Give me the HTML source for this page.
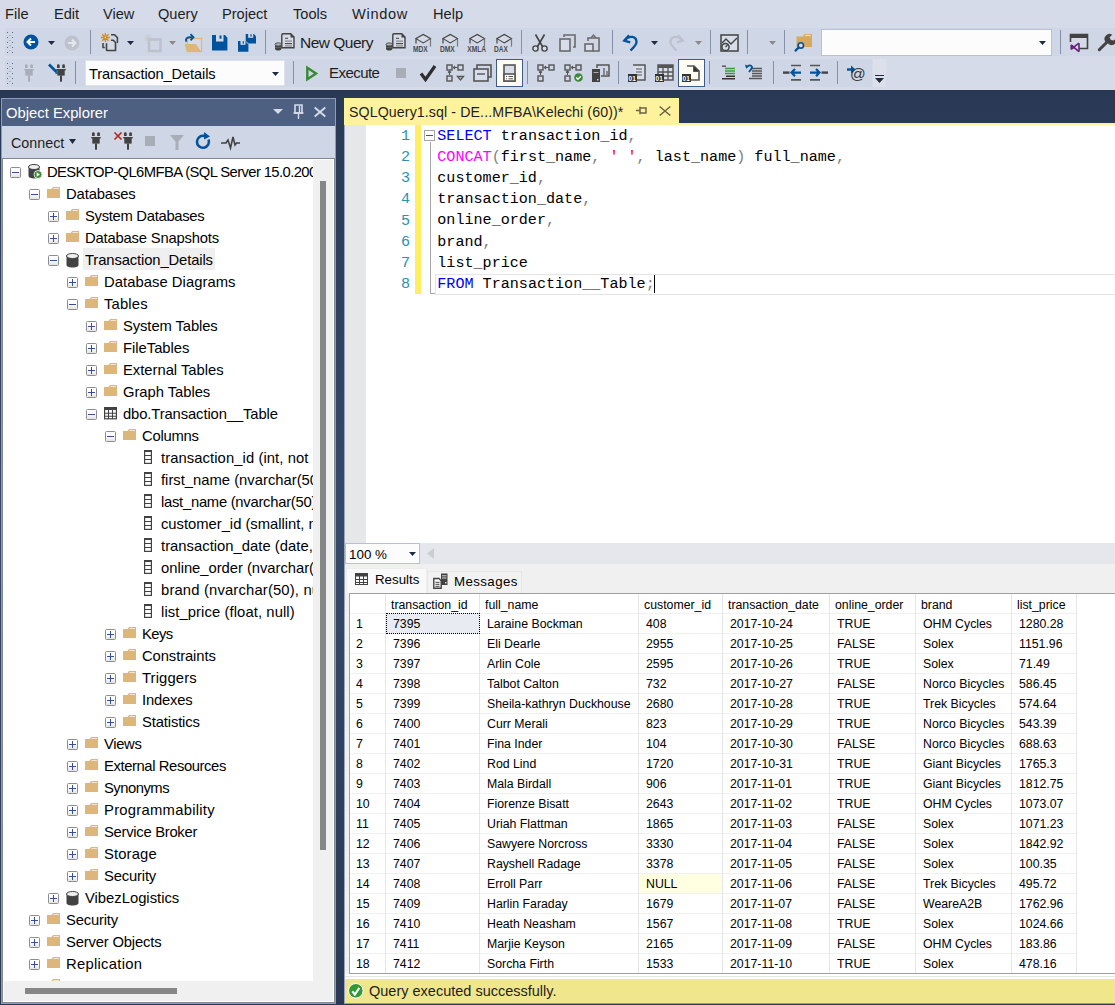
<!DOCTYPE html>
<html><head><meta charset="utf-8"><style>
*{margin:0;padding:0;box-sizing:border-box}
html,body{width:1115px;height:1005px;overflow:hidden;background:linear-gradient(to bottom,#293955 0px,#293955 90px,#35496A 520px,#293955 1005px);font-family:"Liberation Sans",sans-serif;position:relative}
.a{position:absolute}
.t{position:absolute;white-space:nowrap;line-height:1}
svg{position:absolute;overflow:visible}
.menu{font-size:14.6px;color:#1E1E1E}
.ti{position:absolute;font-size:14.8px;color:#000;white-space:nowrap;line-height:1}
.code{position:absolute;font-family:"Liberation Mono",monospace;font-size:15.1px;white-space:pre;line-height:1;color:#000}
.ln{position:absolute;font-family:"Liberation Mono",monospace;font-size:15.1px;color:#2B91AF;line-height:1}
.g{position:absolute;font-size:12.3px;color:#000;white-space:nowrap;line-height:1}
</style></head><body>
<div class="a" style="left:0px;top:0px;width:1115px;height:90px;background:#D6DBE9;"></div>
<div class="t menu" style="left:5px;top:7px;">File</div>
<div class="t menu" style="left:54px;top:7px;">Edit</div>
<div class="t menu" style="left:103px;top:7px;">View</div>
<div class="t menu" style="left:158px;top:7px;">Query</div>
<div class="t menu" style="left:222px;top:7px;">Project</div>
<div class="t menu" style="left:293px;top:7px;">Tools</div>
<div class="t menu" style="left:352px;top:7px;letter-spacing:0.7px">Window</div>
<div class="t menu" style="left:433px;top:7px;">Help</div>
<div class="a" style="left:5px;top:28px;width:1110px;height:28px;background:#CFD6E5;"></div>
<div class="a" style="left:5px;top:59px;width:867px;height:28px;background:#CFD6E5;"></div>
<div class="a" style="left:7px;top:32px;width:1px;height:1px;background:#5A6885;"></div>
<div class="a" style="left:12px;top:32px;width:1px;height:1px;background:#5A6885;"></div>
<div class="a" style="left:7px;top:37px;width:1px;height:1px;background:#5A6885;"></div>
<div class="a" style="left:12px;top:37px;width:1px;height:1px;background:#5A6885;"></div>
<div class="a" style="left:7px;top:42px;width:1px;height:1px;background:#5A6885;"></div>
<div class="a" style="left:12px;top:42px;width:1px;height:1px;background:#5A6885;"></div>
<div class="a" style="left:7px;top:47px;width:1px;height:1px;background:#5A6885;"></div>
<div class="a" style="left:12px;top:47px;width:1px;height:1px;background:#5A6885;"></div>
<div class="a" style="left:7px;top:52px;width:1px;height:1px;background:#5A6885;"></div>
<div class="a" style="left:12px;top:52px;width:1px;height:1px;background:#5A6885;"></div>
<div class="a" style="left:9px;top:35px;width:2px;height:1px;background:#AEB5C4;"></div>
<div class="a" style="left:9px;top:40px;width:2px;height:1px;background:#AEB5C4;"></div>
<div class="a" style="left:9px;top:45px;width:2px;height:1px;background:#AEB5C4;"></div>
<div class="a" style="left:9px;top:50px;width:2px;height:1px;background:#AEB5C4;"></div>
<div class="a" style="left:7px;top:63px;width:1px;height:1px;background:#5A6885;"></div>
<div class="a" style="left:12px;top:63px;width:1px;height:1px;background:#5A6885;"></div>
<div class="a" style="left:7px;top:68px;width:1px;height:1px;background:#5A6885;"></div>
<div class="a" style="left:12px;top:68px;width:1px;height:1px;background:#5A6885;"></div>
<div class="a" style="left:7px;top:73px;width:1px;height:1px;background:#5A6885;"></div>
<div class="a" style="left:12px;top:73px;width:1px;height:1px;background:#5A6885;"></div>
<div class="a" style="left:7px;top:78px;width:1px;height:1px;background:#5A6885;"></div>
<div class="a" style="left:12px;top:78px;width:1px;height:1px;background:#5A6885;"></div>
<div class="a" style="left:7px;top:83px;width:1px;height:1px;background:#5A6885;"></div>
<div class="a" style="left:12px;top:83px;width:1px;height:1px;background:#5A6885;"></div>
<div class="a" style="left:9px;top:66px;width:2px;height:1px;background:#AEB5C4;"></div>
<div class="a" style="left:9px;top:71px;width:2px;height:1px;background:#AEB5C4;"></div>
<div class="a" style="left:9px;top:76px;width:2px;height:1px;background:#AEB5C4;"></div>
<div class="a" style="left:9px;top:81px;width:2px;height:1px;background:#AEB5C4;"></div>
<svg style="left:23px;top:34px" width="16" height="16" viewBox="0 0 16 16"><circle cx="8" cy="8" r="7.5" fill="#00539C"/><path d="M12 8H5M8 4.5L4.5 8L8 11.5" stroke="#fff" stroke-width="2" fill="none"/></svg>
<svg style="left:48px;top:41px" width="7" height="4" viewBox="0 0 7 4"><path d="M0 0h7l-3.5 4z" fill="#1E2B41"/></svg>
<svg style="left:64px;top:35px" width="16" height="16" viewBox="0 0 16 16"><circle cx="8" cy="8" r="7.5" fill="#BDC2CC"/><path d="M4 8h7M8 4.5L11.5 8L8 11.5" stroke="#E4E7EE" stroke-width="2" fill="none"/></svg>
<div class="a" style="left:90px;top:30px;width:1px;height:24px;background:#8591A9;"></div>
<svg style="left:100px;top:33px" width="19" height="19" viewBox="0 0 19 19"><path d="M5.4 0v9M0.9 4.5h9M2.2 1.3l6.4 6.4M8.6 1.3L2.2 7.7" stroke="#D68A1C" stroke-width="1.3"/><circle cx="5.4" cy="4.5" r="0.7" fill="#fff"/><path d="M11 1.8h3.6l2.8 2.8v5.4" stroke="#424242" stroke-width="1.5" fill="none"/><path d="M11 7.3h2.3l2.2 2.2v8H7.2q-0.7 0-0.7-0.7V10.2" fill="#D5DAE7" stroke="#424242" stroke-width="1.6"/><path d="M3 10v4.6h1.8" stroke="#424242" stroke-width="1.5" fill="none"/></svg>
<svg style="left:127px;top:41px" width="7" height="4" viewBox="0 0 7 4"><path d="M0 0h7l-3.5 4z" fill="#1E2B41"/></svg>
<svg style="left:143px;top:33px" width="19" height="19" viewBox="0 0 19 19"><path d="M5 1v8M1 5h8M2 2l6 6M8 2l-6 6" stroke="#C8CCD4" stroke-width="1.2"/><rect x="6" y="6.5" width="11.5" height="11.5" fill="none" stroke="#BDC2CC" stroke-width="2.6"/></svg>
<svg style="left:169px;top:41px" width="7" height="4" viewBox="0 0 7 4"><path d="M0 0h7l-3.5 4z" fill="#8A8A8A"/></svg>
<svg style="left:184px;top:33px" width="19" height="19" viewBox="0 0 19 19"><rect x="3.5" y="5.5" width="14" height="13" fill="#D5DAE7" stroke="#DCB67A" stroke-width="1.2"/><path d="M0.7 11h11.3l5 7.5H2.5z" fill="#DCB67A"/><path d="M2.5 8.8c-1.5-2 0-4.5 3-4.5H8" stroke="#00539C" stroke-width="1.9" fill="none"/><path d="M6.5 1.2l3 3.1-3 3.1" stroke="#00539C" stroke-width="1.8" fill="none"/></svg>
<svg style="left:212px;top:35px" width="16" height="16" viewBox="0 0 16 16"><path d="M0 0h13l2.4 2.8V15.6H0z" fill="#00539C"/><rect x="4" y="0" width="7.5" height="6.5" fill="#D3D9E8"/><rect x="7.5" y="0.5" width="2" height="3.2" fill="#00539C"/></svg>
<svg style="left:237px;top:33px" width="20" height="20" viewBox="0 0 20 20"><path d="M8.7 1h8.3l2 2.3V10.6H8.7z" fill="#00539C"/><rect x="11.2" y="1" width="5" height="3.8" fill="#D3D9E8"/><rect x="13.4" y="1.3" width="1.3" height="2.3" fill="#00539C"/><path d="M1 8h8.4l2 2.3V18.7H1z" fill="#00539C"/><path d="M9 8.5l2.8 2.8" stroke="#CFD6E5" stroke-width="1"/><rect x="3.5" y="8" width="5" height="3.8" fill="#D3D9E8"/><rect x="5.7" y="8.3" width="1.3" height="2.3" fill="#00539C"/></svg>
<div class="a" style="left:265px;top:30px;width:1px;height:24px;background:#8591A9;"></div>
<svg style="left:274px;top:32px" width="20" height="19" viewBox="0 0 20 19"><path d="M9 1.7h7.7l3.3 3.4v10.7H7.8V3q0-1.3 1.2-1.3z" fill="#D5DAE7" stroke="#424242" stroke-width="1.4"/><path d="M16.5 1.2v4.2h4.2z" fill="#424242"/><path d="M11 6.3h3" stroke="#424242" stroke-width="1"/><path d="M11 9.1h7M11 13.9h7" stroke="#8A8A8A" stroke-width="1.1"/><path d="M11 11.6h7" stroke="#424242" stroke-width="1.1"/><path d="M1 12.5v4.3c0 1 1.4 1.8 3.2 1.8s3.2-.8 3.2-1.8v-4.3z" fill="#424242"/><ellipse cx="4.2" cy="12.4" rx="3.2" ry="1.6" fill="#A9ADB5" stroke="#424242" stroke-width="0.8"/><path d="M1 15.4h6.4" stroke="#777" stroke-width="0.6"/></svg>
<div class="t" style="left:300px;top:34.6px;font-size:15.5px;letter-spacing:-0.5px;color:#1E1E1E">New Query</div>
<svg style="left:385px;top:32px" width="20" height="19" viewBox="0 0 20 19"><path d="M9 1.7h7.7l3.3 3.4v10.7H7.8V3q0-1.3 1.2-1.3z" fill="#D5DAE7" stroke="#424242" stroke-width="1.4"/><path d="M16.5 1.2v4.2h4.2z" fill="#424242"/><path d="M11 6.3h3" stroke="#424242" stroke-width="1"/><path d="M11 9.1h7M11 13.9h7" stroke="#8A8A8A" stroke-width="1.1"/><path d="M11 11.6h7" stroke="#424242" stroke-width="1.1"/><path d="M1 12.5v4.3c0 1 1.4 1.8 3.2 1.8s3.2-.8 3.2-1.8v-4.3z" fill="#424242"/><ellipse cx="4.2" cy="12.4" rx="3.2" ry="1.6" fill="#A9ADB5" stroke="#424242" stroke-width="0.8"/><path d="M1 15.4h6.4" stroke="#777" stroke-width="0.6"/></svg>
<svg style="left:413px;top:33px" width="22" height="19" viewBox="0 0 22 19"><path d="M3 5.6l7.25-4.2 7.25 4.2-7.25 4.3z" fill="#D5DAE7" stroke="#424242" stroke-width="1.1"/><path d="M3 5.6v5" stroke="#424242" stroke-width="1.2" fill="none"/><path d="M17.5 5.6v8" stroke="#7A7A7A" stroke-width="1.2" fill="none"/><text x="0" y="18.6" font-family="Liberation Sans" font-weight="bold" font-size="8.4" fill="#4A4A4A" textLength="14.8" lengthAdjust="spacingAndGlyphs">MDX</text></svg>
<svg style="left:440px;top:33px" width="22" height="19" viewBox="0 0 22 19"><path d="M3 5.6l7.25-4.2 7.25 4.2-7.25 4.3z" fill="#D5DAE7" stroke="#424242" stroke-width="1.1"/><path d="M3 5.6v5" stroke="#424242" stroke-width="1.2" fill="none"/><path d="M17.5 5.6v8" stroke="#7A7A7A" stroke-width="1.2" fill="none"/><text x="0" y="18.6" font-family="Liberation Sans" font-weight="bold" font-size="8.4" fill="#4A4A4A" textLength="14.8" lengthAdjust="spacingAndGlyphs">DMX</text></svg>
<svg style="left:467px;top:33px" width="22" height="19" viewBox="0 0 22 19"><path d="M3 5.6l7.25-4.2 7.25 4.2-7.25 4.3z" fill="#D5DAE7" stroke="#424242" stroke-width="1.1"/><path d="M3 5.6v5" stroke="#424242" stroke-width="1.2" fill="none"/><path d="M17.5 5.6v8" stroke="#7A7A7A" stroke-width="1.2" fill="none"/><text x="0.3" y="18.6" font-family="Liberation Sans" font-weight="bold" font-size="8.4" fill="#4A4A4A" textLength="18.6" lengthAdjust="spacingAndGlyphs">XMLA</text></svg>
<svg style="left:494px;top:33px" width="22" height="19" viewBox="0 0 22 19"><path d="M3 5.6l7.25-4.2 7.25 4.2-7.25 4.3z" fill="#D5DAE7" stroke="#424242" stroke-width="1.1"/><path d="M3 5.6v5" stroke="#424242" stroke-width="1.2" fill="none"/><path d="M17.5 5.6v8" stroke="#7A7A7A" stroke-width="1.2" fill="none"/><text x="0" y="18.6" font-family="Liberation Sans" font-weight="bold" font-size="8.4" fill="#4A4A4A" textLength="13.8" lengthAdjust="spacingAndGlyphs">DAX</text></svg>
<div class="a" style="left:521px;top:30px;width:1px;height:24px;background:#8591A9;"></div>
<svg style="left:532px;top:34px" width="16" height="18" viewBox="0 0 16 18"><path d="M3.5 0.5l7 12M12.5 0.5l-7 12" stroke="#424242" stroke-width="1.6"/><circle cx="3.5" cy="14.5" r="2.6" fill="#D8DDEA" stroke="#424242" stroke-width="1.4"/><circle cx="12.5" cy="14.5" r="2.6" fill="#D8DDEA" stroke="#424242" stroke-width="1.4"/></svg>
<svg style="left:559px;top:34px" width="17" height="18" viewBox="0 0 17 18"><path d="M5 3V1h11v12h-2" fill="none" stroke="#6A6A6A" stroke-width="1.6"/><rect x="1" y="5" width="10" height="12" fill="#D8DDEA" stroke="#6A6A6A" stroke-width="1.6"/></svg>
<svg style="left:584px;top:33px" width="17" height="19" viewBox="0 0 17 19"><path d="M4 8V5h11v13H9" fill="none" stroke="#6A6A6A" stroke-width="1.6"/><path d="M7 5l2.5-3 2.5 3" fill="none" stroke="#6A6A6A" stroke-width="1.4"/><rect x="1" y="11" width="8" height="7" fill="#D8DDEA" stroke="#6A6A6A" stroke-width="1.6"/></svg>
<div class="a" style="left:612px;top:30px;width:1px;height:24px;background:#8591A9;"></div>
<svg style="left:622px;top:33px" width="18" height="18" viewBox="0 0 18 18"><path d="M2.5 7.5c5-6 12-4 12 1.5 0 3-3 5.5-6 8.5" stroke="#00539C" stroke-width="2.3" fill="none"/><path d="M7 2.3L2.2 7.6l6 1.8" stroke="#00539C" stroke-width="2.2" fill="none"/></svg>
<svg style="left:651px;top:41px" width="7" height="4" viewBox="0 0 7 4"><path d="M0 0h7l-3.5 4z" fill="#1E2B41"/></svg>
<svg style="left:667px;top:33px" width="18" height="18" viewBox="0 0 18 18"><path d="M15.5 7.5c-5-6-12-4-12 1.5 0 3 3 5.5 6 8.5" stroke="#BDC2CC" stroke-width="2.3" fill="none"/><path d="M11 2.3l4.8 5.3-6 1.8" stroke="#BDC2CC" stroke-width="2.2" fill="none"/></svg>
<svg style="left:695px;top:41px" width="7" height="4" viewBox="0 0 7 4"><path d="M0 0h7l-3.5 4z" fill="#8A8A8A"/></svg>
<div class="a" style="left:710px;top:30px;width:1px;height:24px;background:#8591A9;"></div>
<svg style="left:720px;top:34px" width="19" height="18" viewBox="0 0 19 18"><rect x="1" y="1" width="17" height="16" fill="#D8DDEA" stroke="#424242" stroke-width="1.5"/><path d="M2 9l4-4 5 5 6-6" stroke="#424242" stroke-width="1.4" fill="none"/><circle cx="5.5" cy="13" r="3.6" fill="#D8DDEA" stroke="#424242" stroke-width="1.5"/><path d="M5.5 13l2-2" stroke="#424242" stroke-width="1.2"/></svg>
<div class="a" style="left:747px;top:30px;width:1px;height:24px;background:#8591A9;"></div>
<svg style="left:769px;top:41px" width="7" height="4" viewBox="0 0 7 4"><path d="M0 0h7l-3.5 4z" fill="#8A8A8A"/></svg>
<div class="a" style="left:784px;top:30px;width:1px;height:24px;background:#8591A9;"></div>
<svg style="left:794px;top:33px" width="19" height="19" viewBox="0 0 19 19"><path d="M2.5 3.5H9L10.2 1H18v13H2.5z" fill="#D9A95B"/><path d="M10.8 2.5h6" stroke="#D6E6D8" stroke-width="1.3"/><circle cx="6.8" cy="12.4" r="2.7" fill="#D5DAE7" stroke="#00539C" stroke-width="1.6"/><path d="M4.8 14.4L1.5 17.6" stroke="#00539C" stroke-width="2.2" stroke-linecap="round"/></svg>
<div class="a" style="left:821px;top:29px;width:231px;height:27px;background:#FCFCFC;border:1px solid #B7C0D6"></div>
<svg style="left:1039px;top:41px" width="7" height="4" viewBox="0 0 7 4"><path d="M0 0h7l-3.5 4z" fill="#1E2B41"/></svg>
<div class="a" style="left:1060px;top:30px;width:1px;height:24px;background:#8591A9;"></div>
<svg style="left:1069px;top:33px" width="20" height="20" viewBox="0 0 20 20"><path d="M1.5 9V1.5h17v14H10" fill="#D5DAE7" stroke="#424242" stroke-width="1.6"/><rect x="1" y="1" width="18" height="4" fill="#424242"/><path d="M10 10.2v8.4L2.2 12.2v4L5 14.4" stroke="#68217A" stroke-width="1.6" fill="none" stroke-linejoin="bevel"/><path d="M10 10.2L2.2 16.2M2.2 12.2L5 14.4" stroke="#68217A" stroke-width="1.6" fill="none"/></svg>
<svg style="left:1097px;top:33px" width="20" height="19" viewBox="0 0 20 19"><path d="M2.3 16.7l7.5-7.5" stroke="#424242" stroke-width="3" stroke-linecap="round"/><path d="M8.2 8.6a5 5 0 0 1 7-6.8L12.5 4.5l1.5 2.5 2.6 0.6 2.7-2.6a5 5 0 0 1-7 6.4z" fill="#424242"/></svg>
<svg style="left:24px;top:64px" width="11" height="18" viewBox="0 0 11 18"><path d="M1 4V1.2q0-1 1.35-1 1.35 0 1.35 1V4zM6.2 4V1.2q0-1 1.35-1 1.35 0 1.35 1V4z" fill="#A8ADB8"/><path d="M0 5h10l-0.6 1.4H0.6z" fill="#A8ADB8"/><rect x="1.3" y="6" width="7.4" height="5.6" fill="#A8ADB8"/><rect x="4" y="11.4" width="2" height="6.3" fill="#A8ADB8"/></svg>
<svg style="left:48px;top:63px" width="10" height="11" viewBox="0 0 10 11"><path d="M1 1.5l7.5 7.5" stroke="#00539C" stroke-width="2.6"/><path d="M7 10.5l2.5 0.5-0.5-2.5z" fill="#00539C"/></svg>
<svg style="left:56px;top:64px" width="11" height="18" viewBox="0 0 11 18"><path d="M1 4V1.2q0-1 1.35-1 1.35 0 1.35 1V4zM6.2 4V1.2q0-1 1.35-1 1.35 0 1.35 1V4z" fill="#424242"/><path d="M0 5h10l-0.6 1.4H0.6z" fill="#424242"/><rect x="1.3" y="6" width="7.4" height="5.6" fill="#424242"/><rect x="4" y="11.4" width="2" height="6.3" fill="#424242"/></svg>
<div class="a" style="left:75px;top:61px;width:1px;height:23px;background:#8591A9;"></div>
<div class="a" style="left:85px;top:60px;width:200px;height:26px;background:#FCFCFC;border:1px solid #DCE1EB"></div>
<div class="t" style="left:89px;top:66.8px;font-size:14.6px;letter-spacing:-0.1px;color:#000">Transaction_Details</div>
<svg style="left:272px;top:72px" width="7" height="4" viewBox="0 0 7 4"><path d="M0 0h7l-3.5 4z" fill="#1E2B41"/></svg>
<div class="a" style="left:293px;top:61px;width:1px;height:23px;background:#8591A9;"></div>
<svg style="left:306px;top:66px" width="12" height="15" viewBox="0 0 12 15"><path d="M1.3 1.8v11.4L10 7.5z" fill="none" stroke="#388A34" stroke-width="2.4" stroke-linejoin="miter"/></svg>
<div class="t" style="left:329px;top:65px;font-size:15px;letter-spacing:-0.55px;color:#1E1E1E">Execute</div>
<div class="a" style="left:396px;top:68px;width:10px;height:10px;background:#A8ADB8;"></div>
<svg style="left:420px;top:65px" width="16" height="16" viewBox="0 0 16 16"><path d="M1 8.5l4.5 6L15 1" stroke="#2D2D2D" stroke-width="3.2" fill="none"/></svg>
<svg style="left:446px;top:64px" width="19" height="18" viewBox="0 0 19 18"><rect x="1" y="1" width="5" height="5" fill="none" stroke="#555" stroke-width="1.4"/><rect x="12" y="1" width="5" height="5" fill="none" stroke="#555" stroke-width="1.4"/><rect x="1" y="12" width="5" height="5" fill="none" stroke="#555" stroke-width="1.4"/><path d="M7.5 3.5h4M9 2l-1.5 1.5L9 5M3.5 7v4M2 8.5l1.5-1.5L5 8.5" stroke="#555" stroke-width="1.1" fill="none"/><path d="M11.5 12.5h6l-3 3.5z" fill="none" stroke="#555" stroke-width="1.3"/></svg>
<svg style="left:473px;top:64px" width="19" height="18" viewBox="0 0 19 18"><rect x="4" y="1" width="14" height="12" fill="none" stroke="#555" stroke-width="1.6"/><rect x="1" y="5" width="14" height="12" fill="#D8DDEA" stroke="#555" stroke-width="1.6"/><path d="M4 10h8" stroke="#555" stroke-width="1.4"/></svg>
<div class="a" style="left:496px;top:59px;width:27px;height:28px;background:#FFFCF4;border:1px solid #3E5B8C"></div>
<svg style="left:503px;top:64px" width="13" height="18" viewBox="0 0 13 18"><rect x="1" y="1" width="11" height="16" fill="#D8DDEA" stroke="#555" stroke-width="1.6"/><rect x="1" y="10" width="11" height="7" fill="#FFFCF4" stroke="#555" stroke-width="1.6"/><path d="M3 12.5h1M5.5 12.5h4.5M3 14.8h1M5.5 14.8h4.5" stroke="#555" stroke-width="1"/></svg>
<div class="a" style="left:527px;top:61px;width:1px;height:23px;background:#8591A9;"></div>
<svg style="left:537px;top:64px" width="19" height="18" viewBox="0 0 19 18"><rect x="1" y="1" width="5" height="5" fill="none" stroke="#555" stroke-width="1.4"/><rect x="12" y="1" width="5" height="5" fill="none" stroke="#555" stroke-width="1.4"/><rect x="1" y="12" width="5" height="5" fill="none" stroke="#555" stroke-width="1.4"/><path d="M7.5 3.5h4M9 2l-1.5 1.5L9 5M3.5 7v4M2 8.5l1.5-1.5L5 8.5" stroke="#555" stroke-width="1.1" fill="none"/></svg>
<svg style="left:564px;top:64px" width="19" height="18" viewBox="0 0 19 18"><rect x="1" y="1" width="5" height="5" fill="none" stroke="#555" stroke-width="1.4"/><rect x="12" y="1" width="5" height="5" fill="none" stroke="#555" stroke-width="1.4"/><rect x="1" y="12" width="5" height="5" fill="none" stroke="#555" stroke-width="1.4"/><path d="M7.5 3.5h4M9 2l-1.5 1.5L9 5M3.5 7v4M2 8.5l1.5-1.5L5 8.5" stroke="#555" stroke-width="1.1" fill="none"/><circle cx="14.5" cy="13.5" r="4.3" fill="#388A34"/><path d="M12.2 13.5l1.7 1.7 3-3" stroke="#fff" stroke-width="1.4" fill="none"/></svg>
<svg style="left:591px;top:64px" width="19" height="18" viewBox="0 0 19 18"><rect x="1" y="5" width="8" height="13" fill="#424242"/><path d="M6 4V1h12v11h-8" fill="none" stroke="#555" stroke-width="1.5"/><path d="M13 4v7M16 7v4" stroke="#555" stroke-width="1.2"/><rect x="2.5" y="8" width="5" height="1" fill="#aaa"/><rect x="6" y="15" width="1.5" height="1.5" fill="#ccc"/></svg>
<div class="a" style="left:618px;top:61px;width:1px;height:23px;background:#8591A9;"></div>
<svg style="left:628px;top:64px" width="19" height="18" viewBox="0 0 19 18"><path d="M5 1h12v15H9" fill="#D8DDEA" stroke="#555" stroke-width="1.5"/><path d="M8 5h6M8 8h6M8 11h6" stroke="#555" stroke-width="1.2"/><rect x="0" y="10" width="9" height="8" fill="#333"/><text x="0.6" y="16.8" font-family="Liberation Sans" font-weight="bold" font-size="6.4" fill="#fff">01</text></svg>
<svg style="left:655px;top:64px" width="19" height="18" viewBox="0 0 19 18"><rect x="3" y="1" width="15" height="15" fill="#D8DDEA" stroke="#555" stroke-width="1.5"/><rect x="3" y="1" width="15" height="3" fill="#555"/><path d="M8 4v12M13 4v12M3 8h15M3 12h15" stroke="#555" stroke-width="1.3"/><rect x="0" y="10" width="9" height="8" fill="#333"/><text x="0.6" y="16.8" font-family="Liberation Sans" font-weight="bold" font-size="6.4" fill="#fff">01</text></svg>
<div class="a" style="left:678px;top:59px;width:27px;height:28px;background:#FFFCF4;border:1px solid #3E5B8C"></div>
<svg style="left:682px;top:64px" width="19" height="18" viewBox="0 0 19 18"><path d="M5 2h7l5 5v9H9" fill="none" stroke="#555" stroke-width="1.6"/><path d="M11.5 2v5.5H17" fill="#333" stroke="#555" stroke-width="1"/><rect x="0" y="10" width="9" height="8" fill="#333"/><text x="0.6" y="16.8" font-family="Liberation Sans" font-weight="bold" font-size="6.4" fill="#fff">01</text></svg>
<div class="a" style="left:709px;top:61px;width:1px;height:23px;background:#8591A9;"></div>
<svg style="left:721px;top:65px" width="15" height="15" viewBox="0 0 15 15"><path d="M1 1.2h4" stroke="#444" stroke-width="1.3"/><path d="M4 3.5h10M4 6h10M4 8.5h10" stroke="#3C9A3C" stroke-width="1.5"/><path d="M5 11.3h9M1 13.8h13" stroke="#333" stroke-width="1.5"/></svg>
<svg style="left:745px;top:64px" width="17" height="16" viewBox="0 0 17 16"><path d="M7 4.5h10M7 7h10M7 9.5h10M7 12h10M4 14.5h13" stroke="#555" stroke-width="1.3"/><path d="M2.5 2.2c3-2 6 0 3.5 3.2L4 8" stroke="#00539C" stroke-width="1.8" fill="none"/><path d="M0 0.5l1.2 4.3 3-2.5z" fill="#00539C"/></svg>
<div class="a" style="left:773px;top:61px;width:1px;height:23px;background:#8591A9;"></div>
<svg style="left:783px;top:64px" width="19" height="17" viewBox="0 0 19 17"><path d="M8 1.5h10M8 15.8h10" stroke="#555" stroke-width="1.7"/><path d="M0 8.6h6.5" stroke="#444" stroke-width="2.4"/><path d="M8.5 8.6h9.5M12 5L8.5 8.6l3.5 3.6" stroke="#00539C" stroke-width="2.2" fill="none"/></svg>
<svg style="left:810px;top:64px" width="19" height="17" viewBox="0 0 19 17"><path d="M0 1.5h10M0 15.8h10" stroke="#555" stroke-width="1.7"/><path d="M11.5 8.6H18" stroke="#444" stroke-width="2.4"/><path d="M0 8.6h9.5M6 5l3.5 3.6L6 12.2" stroke="#00539C" stroke-width="2.2" fill="none"/></svg>
<div class="a" style="left:837px;top:61px;width:1px;height:23px;background:#8591A9;"></div>
<div class="a" style="left:873px;top:59px;width:13px;height:28px;background:#DCE0EB;"></div>
<svg style="left:846px;top:65px" width="20" height="17" viewBox="0 0 20 17"><path d="M1 4.5h7" stroke="#00539C" stroke-width="2.4"/><path d="M5 0.5l4.5 4-4.5 4z" fill="#00539C"/><text x="4" y="13.6" font-family="Liberation Sans" font-size="15.5" fill="#383838">@</text></svg>
<div class="a" style="left:875px;top:75px;width:9px;height:1px;background:#1E2B41;"></div>
<svg style="left:875px;top:78px" width="9" height="5" viewBox="0 0 9 5"><path d="M0 0h9l-4.5 5z" fill="#1E2B41"/></svg>
<div class="a" style="left:1px;top:98px;width:335px;height:906px;background:#8E9BBC;"></div>
<div class="a" style="left:2px;top:99px;width:333px;height:27px;background:#4D6082;"></div>
<div class="a" style="left:2px;top:126px;width:333px;height:32px;background:#CFD6E5;"></div>
<div class="t" style="left:6px;top:106px;font-size:14.8px;color:#FFFFFF">Object Explorer</div>
<svg style="left:273px;top:109px" width="10" height="5" viewBox="0 0 10 5"><path d="M0 0h10l-5 5z" fill="#D6DBE9"/></svg>
<svg style="left:293px;top:104px" width="11" height="16" viewBox="0 0 11 16"><path d="M2 1h7v8H2z" fill="none" stroke="#D6DBE9" stroke-width="1.6"/><path d="M0.5 9h10" stroke="#D6DBE9" stroke-width="1.6"/><path d="M5.5 9.5V15" stroke="#D6DBE9" stroke-width="1.4"/><path d="M6.5 2v6" stroke="#D6DBE9" stroke-width="1.4"/></svg>
<svg style="left:314px;top:107px" width="12" height="10" viewBox="0 0 12 10"><path d="M0.7 0.5L11.3 9.5M11.3 0.5L0.7 9.5" stroke="#D6DBE9" stroke-width="1.9"/></svg>
<div class="t" style="left:11px;top:136px;font-size:14.3px;color:#1E1E1E">Connect</div>
<svg style="left:69px;top:139px" width="7" height="5" viewBox="0 0 7 5"><path d="M0 0h7l-3.5 5z" fill="#1E2B41"/></svg>
<svg style="left:91px;top:132px" width="11" height="18" viewBox="0 0 11 18"><path d="M1 4V1.2q0-1 1.35-1 1.35 0 1.35 1V4zM6.2 4V1.2q0-1 1.35-1 1.35 0 1.35 1V4z" fill="#424242"/><path d="M0 5h10l-0.6 1.4H0.6z" fill="#424242"/><rect x="1.3" y="6" width="7.4" height="5.6" fill="#424242"/><rect x="4" y="11.4" width="2" height="6.3" fill="#424242"/></svg>
<svg style="left:114px;top:132px" width="8" height="8" viewBox="0 0 8 8"><path d="M0.5 0.5l7 7M7.5 0.5l-7 7" stroke="#B3260F" stroke-width="1.6"/></svg>
<svg style="left:123px;top:132px" width="11" height="18" viewBox="0 0 11 18"><path d="M1 4V1.2q0-1 1.35-1 1.35 0 1.35 1V4zM6.2 4V1.2q0-1 1.35-1 1.35 0 1.35 1V4z" fill="#424242"/><path d="M0 5h10l-0.6 1.4H0.6z" fill="#424242"/><rect x="1.3" y="6" width="7.4" height="5.6" fill="#424242"/><rect x="4" y="11.4" width="2" height="6.3" fill="#424242"/></svg>
<div class="a" style="left:145px;top:136px;width:10px;height:10px;background:#A8ADB8;"></div>
<svg style="left:170px;top:135px" width="14" height="15" viewBox="0 0 14 15"><path d="M0 0h14L8.5 6.5V15h-3V6.5z" fill="#A8ADB8"/></svg>
<svg style="left:196px;top:132px" width="16" height="18" viewBox="0 0 16 18"><path d="M12.5 7.5a6 6 0 1 1-4-3.5" stroke="#00539C" stroke-width="2.6" fill="none"/><path d="M8 0l6 4.5-6 3z" fill="#00539C"/></svg>
<svg style="left:221px;top:135.5px" width="19" height="13" viewBox="0 0 19 13"><path d="M0 7h5l2-3 2.5 8 2.5-11 2 8 1.5-2H19" stroke="#424242" stroke-width="1.6" fill="none"/></svg>
<div class="a" style="left:2px;top:158px;width:333px;height:845px;background:#828790;"></div>
<div class="a" style="left:3px;top:159px;width:331px;height:843px;background:#FFFFFF;"></div>
<div class="a" style="left:313px;top:160px;width:20px;height:821px;background:#F0F0F0;"></div>
<div class="a" style="left:4px;top:981px;width:329px;height:20px;background:#F0F0F0;"></div>
<div class="a" style="left:320px;top:181px;width:6px;height:669px;background:#868686;"></div>
<div class="a" style="left:25px;top:988px;width:152px;height:6px;background:#868686;"></div>
<div class="a" style="left:3px;top:159px;width:310px;height:822px;overflow:hidden">
<div class="a" style="left:7px;top:8px;width:11px;height:11px;border:1px solid #8D8D8D;border-radius:1.5px;background:linear-gradient(#FFFFFF 45%,#E2E2E2)"></div>
<div class="a" style="left:9px;top:13px;width:7px;height:1px;background:#354E9D"></div>
<svg style="left:25px;top:5px" width="14" height="15"><path d="M0.5 3v9c0 1.6 2.5 2.5 5.5 2.5s5.5-.9 5.5-2.5V3z" fill="#424242"/><ellipse cx="6" cy="3" rx="5.5" ry="2.5" fill="#F0F0F0" stroke="#424242" stroke-width="1"/><circle cx="10" cy="10.5" r="4" fill="#388A34" stroke="#fff" stroke-width="0.8"/><path d="M8.7 8.3v4.4l3.3-2.2z" fill="#fff"/></svg>
<div class="ti" style="left:44px;top:6px;letter-spacing:-0.6px">DESKTOP-QL6MFBA (SQL Server 15.0.2000 - DESKTOP-QL6MFBA\Kelechi)</div>
<div class="a" style="left:26px;top:30px;width:11px;height:11px;border:1px solid #8D8D8D;border-radius:1.5px;background:linear-gradient(#FFFFFF 45%,#E2E2E2)"></div>
<div class="a" style="left:28px;top:35px;width:7px;height:1px;background:#354E9D"></div>
<svg style="left:44px;top:28px" width="13" height="11"><path d="M0 2h4.5l1.5-2h7v11H0z" fill="#DCB67A"/><path d="M6.5 1.5h5.5" stroke="#F4E6CA" stroke-width="1"/></svg>
<div class="ti" style="left:63px;top:28px;letter-spacing:-0.125px">Databases</div>
<div class="a" style="left:45px;top:52px;width:11px;height:11px;border:1px solid #8D8D8D;border-radius:1.5px;background:linear-gradient(#FFFFFF 45%,#E2E2E2)"></div>
<div class="a" style="left:47px;top:57px;width:7px;height:1px;background:#354E9D"></div>
<div class="a" style="left:50px;top:54px;width:1px;height:7px;background:#354E9D"></div>
<svg style="left:63px;top:50px" width="13" height="11"><path d="M0 2h4.5l1.5-2h7v11H0z" fill="#DCB67A"/><path d="M6.5 1.5h5.5" stroke="#F4E6CA" stroke-width="1"/></svg>
<div class="ti" style="left:82px;top:50px;letter-spacing:-0.3px">System Databases</div>
<div class="a" style="left:45px;top:74px;width:11px;height:11px;border:1px solid #8D8D8D;border-radius:1.5px;background:linear-gradient(#FFFFFF 45%,#E2E2E2)"></div>
<div class="a" style="left:47px;top:79px;width:7px;height:1px;background:#354E9D"></div>
<div class="a" style="left:50px;top:76px;width:1px;height:7px;background:#354E9D"></div>
<svg style="left:63px;top:72px" width="13" height="11"><path d="M0 2h4.5l1.5-2h7v11H0z" fill="#DCB67A"/><path d="M6.5 1.5h5.5" stroke="#F4E6CA" stroke-width="1"/></svg>
<div class="ti" style="left:82px;top:72px;letter-spacing:-0.188px">Database Snapshots</div>
<div class="a" style="left:80px;top:89px;width:132px;height:22px;background:#EFEFEF"></div>
<div class="a" style="left:45px;top:96px;width:11px;height:11px;border:1px solid #8D8D8D;border-radius:1.5px;background:linear-gradient(#FFFFFF 45%,#E2E2E2)"></div>
<div class="a" style="left:47px;top:101px;width:7px;height:1px;background:#354E9D"></div>
<svg style="left:63px;top:94px" width="13" height="15"><path d="M0.5 3v9c0 1.6 2.6 2.5 6 2.5s6-.9 6-2.5V3z" fill="#424242"/><ellipse cx="6.5" cy="3" rx="6" ry="2.5" fill="#F0F0F0" stroke="#424242" stroke-width="1"/></svg>
<div class="ti" style="left:82px;top:94px;letter-spacing:-0.122px">Transaction_Details</div>
<div class="a" style="left:64px;top:118px;width:11px;height:11px;border:1px solid #8D8D8D;border-radius:1.5px;background:linear-gradient(#FFFFFF 45%,#E2E2E2)"></div>
<div class="a" style="left:66px;top:123px;width:7px;height:1px;background:#354E9D"></div>
<div class="a" style="left:69px;top:120px;width:1px;height:7px;background:#354E9D"></div>
<svg style="left:82px;top:116px" width="13" height="11"><path d="M0 2h4.5l1.5-2h7v11H0z" fill="#DCB67A"/><path d="M6.5 1.5h5.5" stroke="#F4E6CA" stroke-width="1"/></svg>
<div class="ti" style="left:101px;top:116px;letter-spacing:0.044px">Database Diagrams</div>
<div class="a" style="left:64px;top:140px;width:11px;height:11px;border:1px solid #8D8D8D;border-radius:1.5px;background:linear-gradient(#FFFFFF 45%,#E2E2E2)"></div>
<div class="a" style="left:66px;top:145px;width:7px;height:1px;background:#354E9D"></div>
<svg style="left:82px;top:138px" width="13" height="11"><path d="M0 2h4.5l1.5-2h7v11H0z" fill="#DCB67A"/><path d="M6.5 1.5h5.5" stroke="#F4E6CA" stroke-width="1"/></svg>
<div class="ti" style="left:101px;top:138px;letter-spacing:0.16px">Tables</div>
<div class="a" style="left:83px;top:162px;width:11px;height:11px;border:1px solid #8D8D8D;border-radius:1.5px;background:linear-gradient(#FFFFFF 45%,#E2E2E2)"></div>
<div class="a" style="left:85px;top:167px;width:7px;height:1px;background:#354E9D"></div>
<div class="a" style="left:88px;top:164px;width:1px;height:7px;background:#354E9D"></div>
<svg style="left:101px;top:160px" width="13" height="11"><path d="M0 2h4.5l1.5-2h7v11H0z" fill="#DCB67A"/><path d="M6.5 1.5h5.5" stroke="#F4E6CA" stroke-width="1"/></svg>
<div class="ti" style="left:120px;top:160px;letter-spacing:-0.1px">System Tables</div>
<div class="a" style="left:83px;top:184px;width:11px;height:11px;border:1px solid #8D8D8D;border-radius:1.5px;background:linear-gradient(#FFFFFF 45%,#E2E2E2)"></div>
<div class="a" style="left:85px;top:189px;width:7px;height:1px;background:#354E9D"></div>
<div class="a" style="left:88px;top:186px;width:1px;height:7px;background:#354E9D"></div>
<svg style="left:101px;top:182px" width="13" height="11"><path d="M0 2h4.5l1.5-2h7v11H0z" fill="#DCB67A"/><path d="M6.5 1.5h5.5" stroke="#F4E6CA" stroke-width="1"/></svg>
<div class="ti" style="left:120px;top:182px;letter-spacing:-0.022px">FileTables</div>
<div class="a" style="left:83px;top:206px;width:11px;height:11px;border:1px solid #8D8D8D;border-radius:1.5px;background:linear-gradient(#FFFFFF 45%,#E2E2E2)"></div>
<div class="a" style="left:85px;top:211px;width:7px;height:1px;background:#354E9D"></div>
<div class="a" style="left:88px;top:208px;width:1px;height:7px;background:#354E9D"></div>
<svg style="left:101px;top:204px" width="13" height="11"><path d="M0 2h4.5l1.5-2h7v11H0z" fill="#DCB67A"/><path d="M6.5 1.5h5.5" stroke="#F4E6CA" stroke-width="1"/></svg>
<div class="ti" style="left:120px;top:204px;letter-spacing:-0.021px">External Tables</div>
<div class="a" style="left:83px;top:228px;width:11px;height:11px;border:1px solid #8D8D8D;border-radius:1.5px;background:linear-gradient(#FFFFFF 45%,#E2E2E2)"></div>
<div class="a" style="left:85px;top:233px;width:7px;height:1px;background:#354E9D"></div>
<div class="a" style="left:88px;top:230px;width:1px;height:7px;background:#354E9D"></div>
<svg style="left:101px;top:226px" width="13" height="11"><path d="M0 2h4.5l1.5-2h7v11H0z" fill="#DCB67A"/><path d="M6.5 1.5h5.5" stroke="#F4E6CA" stroke-width="1"/></svg>
<div class="ti" style="left:120px;top:226px;letter-spacing:-0.045px">Graph Tables</div>
<div class="a" style="left:83px;top:250px;width:11px;height:11px;border:1px solid #8D8D8D;border-radius:1.5px;background:linear-gradient(#FFFFFF 45%,#E2E2E2)"></div>
<div class="a" style="left:85px;top:255px;width:7px;height:1px;background:#354E9D"></div>
<svg style="left:101px;top:248px" width="13" height="12"><rect x="0.6" y="0.6" width="11.8" height="11.2" fill="#fff" stroke="#424242" stroke-width="1.2"/><rect x="0" y="0" width="13" height="3" fill="#424242"/><path d="M4.5 3v9M8.5 3v9M0 6.3h13M0 9.3h13" stroke="#424242" stroke-width="1.1"/></svg>
<div class="ti" style="left:120px;top:248px;letter-spacing:-0.119px">dbo.Transaction__Table</div>
<div class="a" style="left:102px;top:272px;width:11px;height:11px;border:1px solid #8D8D8D;border-radius:1.5px;background:linear-gradient(#FFFFFF 45%,#E2E2E2)"></div>
<div class="a" style="left:104px;top:277px;width:7px;height:1px;background:#354E9D"></div>
<svg style="left:120px;top:270px" width="13" height="11"><path d="M0 2h4.5l1.5-2h7v11H0z" fill="#DCB67A"/><path d="M6.5 1.5h5.5" stroke="#F4E6CA" stroke-width="1"/></svg>
<div class="ti" style="left:139px;top:270px;letter-spacing:-0.233px">Columns</div>
<svg style="left:141px;top:291px" width="8" height="14"><rect x="0.6" y="0.6" width="6.8" height="12.8" fill="#fff" stroke="#424242" stroke-width="1.2"/><rect x="0" y="0" width="8" height="2" fill="#424242"/><path d="M0 5.5h8M0 9.5h8" stroke="#424242" stroke-width="1.1"/></svg>
<div class="ti" style="left:158px;top:292px;letter-spacing:0.078px">transaction_id (int, not null)</div>
<svg style="left:141px;top:313px" width="8" height="14"><rect x="0.6" y="0.6" width="6.8" height="12.8" fill="#fff" stroke="#424242" stroke-width="1.2"/><rect x="0" y="0" width="8" height="2" fill="#424242"/><path d="M0 5.5h8M0 9.5h8" stroke="#424242" stroke-width="1.1"/></svg>
<div class="ti" style="left:158px;top:314px;letter-spacing:0.0px">first_name (nvarchar(50), null)</div>
<svg style="left:141px;top:335px" width="8" height="14"><rect x="0.6" y="0.6" width="6.8" height="12.8" fill="#fff" stroke="#424242" stroke-width="1.2"/><rect x="0" y="0" width="8" height="2" fill="#424242"/><path d="M0 5.5h8M0 9.5h8" stroke="#424242" stroke-width="1.1"/></svg>
<div class="ti" style="left:158px;top:336px;letter-spacing:-0.267px">last_name (nvarchar(50), null)</div>
<svg style="left:141px;top:357px" width="8" height="14"><rect x="0.6" y="0.6" width="6.8" height="12.8" fill="#fff" stroke="#424242" stroke-width="1.2"/><rect x="0" y="0" width="8" height="2" fill="#424242"/><path d="M0 5.5h8M0 9.5h8" stroke="#424242" stroke-width="1.1"/></svg>
<div class="ti" style="left:158px;top:358px;letter-spacing:-0.024px">customer_id (smallint, null)</div>
<svg style="left:141px;top:379px" width="8" height="14"><rect x="0.6" y="0.6" width="6.8" height="12.8" fill="#fff" stroke="#424242" stroke-width="1.2"/><rect x="0" y="0" width="8" height="2" fill="#424242"/><path d="M0 5.5h8M0 9.5h8" stroke="#424242" stroke-width="1.1"/></svg>
<div class="ti" style="left:158px;top:380px;letter-spacing:0.018px">transaction_date (date, null)</div>
<svg style="left:141px;top:401px" width="8" height="14"><rect x="0.6" y="0.6" width="6.8" height="12.8" fill="#fff" stroke="#424242" stroke-width="1.2"/><rect x="0" y="0" width="8" height="2" fill="#424242"/><path d="M0 5.5h8M0 9.5h8" stroke="#424242" stroke-width="1.1"/></svg>
<div class="ti" style="left:158px;top:402px;letter-spacing:-0.038px">online_order (nvarchar(50), null)</div>
<svg style="left:141px;top:423px" width="8" height="14"><rect x="0.6" y="0.6" width="6.8" height="12.8" fill="#fff" stroke="#424242" stroke-width="1.2"/><rect x="0" y="0" width="8" height="2" fill="#424242"/><path d="M0 5.5h8M0 9.5h8" stroke="#424242" stroke-width="1.1"/></svg>
<div class="ti" style="left:158px;top:424px;letter-spacing:0.162px">brand (nvarchar(50), null)</div>
<svg style="left:141px;top:445px" width="8" height="14"><rect x="0.6" y="0.6" width="6.8" height="12.8" fill="#fff" stroke="#424242" stroke-width="1.2"/><rect x="0" y="0" width="8" height="2" fill="#424242"/><path d="M0 5.5h8M0 9.5h8" stroke="#424242" stroke-width="1.1"/></svg>
<div class="ti" style="left:158px;top:446px;letter-spacing:0.091px">list_price (float, null)</div>
<div class="a" style="left:102px;top:470px;width:11px;height:11px;border:1px solid #8D8D8D;border-radius:1.5px;background:linear-gradient(#FFFFFF 45%,#E2E2E2)"></div>
<div class="a" style="left:104px;top:475px;width:7px;height:1px;background:#354E9D"></div>
<div class="a" style="left:107px;top:472px;width:1px;height:7px;background:#354E9D"></div>
<svg style="left:120px;top:468px" width="13" height="11"><path d="M0 2h4.5l1.5-2h7v11H0z" fill="#DCB67A"/><path d="M6.5 1.5h5.5" stroke="#F4E6CA" stroke-width="1"/></svg>
<div class="ti" style="left:139px;top:468px;letter-spacing:-0.6px">Keys</div>
<div class="a" style="left:102px;top:492px;width:11px;height:11px;border:1px solid #8D8D8D;border-radius:1.5px;background:linear-gradient(#FFFFFF 45%,#E2E2E2)"></div>
<div class="a" style="left:104px;top:497px;width:7px;height:1px;background:#354E9D"></div>
<div class="a" style="left:107px;top:494px;width:1px;height:7px;background:#354E9D"></div>
<svg style="left:120px;top:490px" width="13" height="11"><path d="M0 2h4.5l1.5-2h7v11H0z" fill="#DCB67A"/><path d="M6.5 1.5h5.5" stroke="#F4E6CA" stroke-width="1"/></svg>
<div class="ti" style="left:139px;top:490px;letter-spacing:-0.1px">Constraints</div>
<div class="a" style="left:102px;top:514px;width:11px;height:11px;border:1px solid #8D8D8D;border-radius:1.5px;background:linear-gradient(#FFFFFF 45%,#E2E2E2)"></div>
<div class="a" style="left:104px;top:519px;width:7px;height:1px;background:#354E9D"></div>
<div class="a" style="left:107px;top:516px;width:1px;height:7px;background:#354E9D"></div>
<svg style="left:120px;top:512px" width="13" height="11"><path d="M0 2h4.5l1.5-2h7v11H0z" fill="#DCB67A"/><path d="M6.5 1.5h5.5" stroke="#F4E6CA" stroke-width="1"/></svg>
<div class="ti" style="left:139px;top:512px;letter-spacing:0.129px">Triggers</div>
<div class="a" style="left:102px;top:536px;width:11px;height:11px;border:1px solid #8D8D8D;border-radius:1.5px;background:linear-gradient(#FFFFFF 45%,#E2E2E2)"></div>
<div class="a" style="left:104px;top:541px;width:7px;height:1px;background:#354E9D"></div>
<div class="a" style="left:107px;top:538px;width:1px;height:7px;background:#354E9D"></div>
<svg style="left:120px;top:534px" width="13" height="11"><path d="M0 2h4.5l1.5-2h7v11H0z" fill="#DCB67A"/><path d="M6.5 1.5h5.5" stroke="#F4E6CA" stroke-width="1"/></svg>
<div class="ti" style="left:139px;top:534px;letter-spacing:-0.2px">Indexes</div>
<div class="a" style="left:102px;top:558px;width:11px;height:11px;border:1px solid #8D8D8D;border-radius:1.5px;background:linear-gradient(#FFFFFF 45%,#E2E2E2)"></div>
<div class="a" style="left:104px;top:563px;width:7px;height:1px;background:#354E9D"></div>
<div class="a" style="left:107px;top:560px;width:1px;height:7px;background:#354E9D"></div>
<svg style="left:120px;top:556px" width="13" height="11"><path d="M0 2h4.5l1.5-2h7v11H0z" fill="#DCB67A"/><path d="M6.5 1.5h5.5" stroke="#F4E6CA" stroke-width="1"/></svg>
<div class="ti" style="left:139px;top:556px;letter-spacing:-0.144px">Statistics</div>
<div class="a" style="left:64px;top:580px;width:11px;height:11px;border:1px solid #8D8D8D;border-radius:1.5px;background:linear-gradient(#FFFFFF 45%,#E2E2E2)"></div>
<div class="a" style="left:66px;top:585px;width:7px;height:1px;background:#354E9D"></div>
<div class="a" style="left:69px;top:582px;width:1px;height:7px;background:#354E9D"></div>
<svg style="left:82px;top:578px" width="13" height="11"><path d="M0 2h4.5l1.5-2h7v11H0z" fill="#DCB67A"/><path d="M6.5 1.5h5.5" stroke="#F4E6CA" stroke-width="1"/></svg>
<div class="ti" style="left:101px;top:578px;letter-spacing:-0.35px">Views</div>
<div class="a" style="left:64px;top:602px;width:11px;height:11px;border:1px solid #8D8D8D;border-radius:1.5px;background:linear-gradient(#FFFFFF 45%,#E2E2E2)"></div>
<div class="a" style="left:66px;top:607px;width:7px;height:1px;background:#354E9D"></div>
<div class="a" style="left:69px;top:604px;width:1px;height:7px;background:#354E9D"></div>
<svg style="left:82px;top:600px" width="13" height="11"><path d="M0 2h4.5l1.5-2h7v11H0z" fill="#DCB67A"/><path d="M6.5 1.5h5.5" stroke="#F4E6CA" stroke-width="1"/></svg>
<div class="ti" style="left:101px;top:600px;letter-spacing:-0.4px">External Resources</div>
<div class="a" style="left:64px;top:624px;width:11px;height:11px;border:1px solid #8D8D8D;border-radius:1.5px;background:linear-gradient(#FFFFFF 45%,#E2E2E2)"></div>
<div class="a" style="left:66px;top:629px;width:7px;height:1px;background:#354E9D"></div>
<div class="a" style="left:69px;top:626px;width:1px;height:7px;background:#354E9D"></div>
<svg style="left:82px;top:622px" width="13" height="11"><path d="M0 2h4.5l1.5-2h7v11H0z" fill="#DCB67A"/><path d="M6.5 1.5h5.5" stroke="#F4E6CA" stroke-width="1"/></svg>
<div class="ti" style="left:101px;top:622px;letter-spacing:-0.5px">Synonyms</div>
<div class="a" style="left:64px;top:646px;width:11px;height:11px;border:1px solid #8D8D8D;border-radius:1.5px;background:linear-gradient(#FFFFFF 45%,#E2E2E2)"></div>
<div class="a" style="left:66px;top:651px;width:7px;height:1px;background:#354E9D"></div>
<div class="a" style="left:69px;top:648px;width:1px;height:7px;background:#354E9D"></div>
<svg style="left:82px;top:644px" width="13" height="11"><path d="M0 2h4.5l1.5-2h7v11H0z" fill="#DCB67A"/><path d="M6.5 1.5h5.5" stroke="#F4E6CA" stroke-width="1"/></svg>
<div class="ti" style="left:101px;top:644px;letter-spacing:0.264px">Programmability</div>
<div class="a" style="left:64px;top:668px;width:11px;height:11px;border:1px solid #8D8D8D;border-radius:1.5px;background:linear-gradient(#FFFFFF 45%,#E2E2E2)"></div>
<div class="a" style="left:66px;top:673px;width:7px;height:1px;background:#354E9D"></div>
<div class="a" style="left:69px;top:670px;width:1px;height:7px;background:#354E9D"></div>
<svg style="left:82px;top:666px" width="13" height="11"><path d="M0 2h4.5l1.5-2h7v11H0z" fill="#DCB67A"/><path d="M6.5 1.5h5.5" stroke="#F4E6CA" stroke-width="1"/></svg>
<div class="ti" style="left:101px;top:666px;letter-spacing:-0.285px">Service Broker</div>
<div class="a" style="left:64px;top:690px;width:11px;height:11px;border:1px solid #8D8D8D;border-radius:1.5px;background:linear-gradient(#FFFFFF 45%,#E2E2E2)"></div>
<div class="a" style="left:66px;top:695px;width:7px;height:1px;background:#354E9D"></div>
<div class="a" style="left:69px;top:692px;width:1px;height:7px;background:#354E9D"></div>
<svg style="left:82px;top:688px" width="13" height="11"><path d="M0 2h4.5l1.5-2h7v11H0z" fill="#DCB67A"/><path d="M6.5 1.5h5.5" stroke="#F4E6CA" stroke-width="1"/></svg>
<div class="ti" style="left:101px;top:688px;letter-spacing:0.133px">Storage</div>
<div class="a" style="left:64px;top:712px;width:11px;height:11px;border:1px solid #8D8D8D;border-radius:1.5px;background:linear-gradient(#FFFFFF 45%,#E2E2E2)"></div>
<div class="a" style="left:66px;top:717px;width:7px;height:1px;background:#354E9D"></div>
<div class="a" style="left:69px;top:714px;width:1px;height:7px;background:#354E9D"></div>
<svg style="left:82px;top:710px" width="13" height="11"><path d="M0 2h4.5l1.5-2h7v11H0z" fill="#DCB67A"/><path d="M6.5 1.5h5.5" stroke="#F4E6CA" stroke-width="1"/></svg>
<div class="ti" style="left:101px;top:710px;letter-spacing:-0.171px">Security</div>
<div class="a" style="left:45px;top:734px;width:11px;height:11px;border:1px solid #8D8D8D;border-radius:1.5px;background:linear-gradient(#FFFFFF 45%,#E2E2E2)"></div>
<div class="a" style="left:47px;top:739px;width:7px;height:1px;background:#354E9D"></div>
<div class="a" style="left:50px;top:736px;width:1px;height:7px;background:#354E9D"></div>
<svg style="left:63px;top:732px" width="13" height="15"><path d="M0.5 3v9c0 1.6 2.6 2.5 6 2.5s6-.9 6-2.5V3z" fill="#424242"/><ellipse cx="6.5" cy="3" rx="6" ry="2.5" fill="#F0F0F0" stroke="#424242" stroke-width="1"/></svg>
<div class="ti" style="left:82px;top:732px;letter-spacing:-0.008px">VibezLogistics</div>
<div class="a" style="left:26px;top:756px;width:11px;height:11px;border:1px solid #8D8D8D;border-radius:1.5px;background:linear-gradient(#FFFFFF 45%,#E2E2E2)"></div>
<div class="a" style="left:28px;top:761px;width:7px;height:1px;background:#354E9D"></div>
<div class="a" style="left:31px;top:758px;width:1px;height:7px;background:#354E9D"></div>
<svg style="left:44px;top:754px" width="13" height="11"><path d="M0 2h4.5l1.5-2h7v11H0z" fill="#DCB67A"/><path d="M6.5 1.5h5.5" stroke="#F4E6CA" stroke-width="1"/></svg>
<div class="ti" style="left:63px;top:754px;letter-spacing:-0.186px">Security</div>
<div class="a" style="left:26px;top:778px;width:11px;height:11px;border:1px solid #8D8D8D;border-radius:1.5px;background:linear-gradient(#FFFFFF 45%,#E2E2E2)"></div>
<div class="a" style="left:28px;top:783px;width:7px;height:1px;background:#354E9D"></div>
<div class="a" style="left:31px;top:780px;width:1px;height:7px;background:#354E9D"></div>
<svg style="left:44px;top:776px" width="13" height="11"><path d="M0 2h4.5l1.5-2h7v11H0z" fill="#DCB67A"/><path d="M6.5 1.5h5.5" stroke="#F4E6CA" stroke-width="1"/></svg>
<div class="ti" style="left:63px;top:776px;letter-spacing:-0.177px">Server Objects</div>
<div class="a" style="left:26px;top:800px;width:11px;height:11px;border:1px solid #8D8D8D;border-radius:1.5px;background:linear-gradient(#FFFFFF 45%,#E2E2E2)"></div>
<div class="a" style="left:28px;top:805px;width:7px;height:1px;background:#354E9D"></div>
<div class="a" style="left:31px;top:802px;width:1px;height:7px;background:#354E9D"></div>
<svg style="left:44px;top:798px" width="13" height="11"><path d="M0 2h4.5l1.5-2h7v11H0z" fill="#DCB67A"/><path d="M6.5 1.5h5.5" stroke="#F4E6CA" stroke-width="1"/></svg>
<div class="ti" style="left:63px;top:798px;letter-spacing:0.28px">Replication</div>
<div class="a" style="left:26px;top:822px;width:11px;height:11px;border:1px solid #8D8D8D;border-radius:1.5px;background:linear-gradient(#FFFFFF 45%,#E2E2E2)"></div>
<div class="a" style="left:28px;top:827px;width:7px;height:1px;background:#354E9D"></div>
<div class="a" style="left:31px;top:824px;width:1px;height:7px;background:#354E9D"></div>
<svg style="left:44px;top:820px" width="13" height="11"><path d="M0 2h4.5l1.5-2h7v11H0z" fill="#DCB67A"/><path d="M6.5 1.5h5.5" stroke="#F4E6CA" stroke-width="1"/></svg>
</div>
<div class="a" style="left:344px;top:98px;width:335px;height:27px;background:#FFF29D;"></div>
<div class="a" style="left:344px;top:123px;width:771px;height:2px;background:#FFF29D;"></div>
<div class="a" style="left:344px;top:125px;width:771px;height:418px;background:#FFFFFF;"></div>
<div class="a" style="left:344px;top:125px;width:1px;height:418px;background:#9AA5BF;"></div>
<div class="a" style="left:345px;top:125px;width:21px;height:418px;background:#E6E7E8;"></div>
<div class="t" style="left:349px;top:105px;font-size:14.2px;letter-spacing:0.1px;color:#1E1E1E">SQLQuery1.sql - DE...MFBA\Kelechi (60))*</div>
<svg style="left:636px;top:106px" width="11" height="9" viewBox="0 0 11 9"><path d="M0 4.5h4M4 0.8v7.4M4 2h6v5H4" stroke="#6E6248" stroke-width="1.5" fill="none"/></svg>
<svg style="left:659px;top:106px" width="12" height="10" viewBox="0 0 12 10"><path d="M0.7 0.5L11.3 9.5M11.3 0.5L0.7 9.5" stroke="#6E6248" stroke-width="1.6"/></svg>
<div class="a" style="left:415px;top:125px;width:6px;height:169px;background:#FFEE62;"></div>
<div class="a" style="left:424px;top:130px;width:11px;height:11px;background:#FFFFFF;border:1px solid #A5A5A5"></div>
<div class="a" style="left:426px;top:135px;width:7px;height:1px;background:#555;"></div>
<div class="a" style="left:430px;top:142px;width:1px;height:152px;background:#A5A5A5;"></div>
<div class="a" style="left:430px;top:293px;width:5px;height:1px;background:#A5A5A5;"></div>
<div class="a" style="left:435px;top:274px;width:680px;height:21px;background:transparent;border:1px solid #E4E4E4;border-right:none"></div>
<div class="ln" style="left:401px;top:129.00px">1</div>
<div class="code" style="left:437.3px;top:128.90px"><span style="color:#0000FF">SELECT</span> transaction_id<span style="color:#808080">,</span></div>
<div class="ln" style="left:401px;top:150.14px">2</div>
<div class="code" style="left:437.3px;top:150.04px"><span style="color:#FF00FF">CONCAT</span><span style="color:#808080">(</span>first_name<span style="color:#808080">,</span> <span style="color:#FF0000">' '</span><span style="color:#808080">,</span> last_name<span style="color:#808080">)</span> full_name<span style="color:#808080">,</span></div>
<div class="ln" style="left:401px;top:171.28px">3</div>
<div class="code" style="left:437.3px;top:171.18px">customer_id<span style="color:#808080">,</span></div>
<div class="ln" style="left:401px;top:192.42px">4</div>
<div class="code" style="left:437.3px;top:192.32px">transaction_date<span style="color:#808080">,</span></div>
<div class="ln" style="left:401px;top:213.56px">5</div>
<div class="code" style="left:437.3px;top:213.46px">online_order<span style="color:#808080">,</span></div>
<div class="ln" style="left:401px;top:234.70px">6</div>
<div class="code" style="left:437.3px;top:234.60px">brand<span style="color:#808080">,</span></div>
<div class="ln" style="left:401px;top:255.84px">7</div>
<div class="code" style="left:437.3px;top:255.74px">list_price</div>
<div class="ln" style="left:401px;top:276.98px">8</div>
<div class="code" style="left:437.3px;top:276.88px"><span style="color:#0000FF">FROM</span> Transaction__Table<span style="color:#808080">;</span></div>
<div class="a" style="left:654px;top:275px;width:1px;height:18px;background:#000;"></div>
<div class="a" style="left:344px;top:543px;width:771px;height:436px;background:#F0F0F0;"></div>
<div class="a" style="left:344px;top:543px;width:1px;height:436px;background:#9AA5BF;"></div>
<div class="a" style="left:345px;top:543px;width:770px;height:21px;background:#E6E7EC;"></div>
<div class="a" style="left:345px;top:543px;width:75px;height:21px;background:#FCFCFC;border:1px solid #B7C0D6"></div>
<div class="t" style="left:349px;top:548px;font-size:13.4px;color:#000">100 %</div>
<svg style="left:409px;top:552px" width="7" height="4" viewBox="0 0 7 4"><path d="M0 0h7l-3.5 4z" fill="#1E2B41"/></svg>
<svg style="left:427px;top:548px" width="7" height="11" viewBox="0 0 7 11"><path d="M7 0v11L0 5.5z" fill="#C9CDD6"/></svg>
<div class="a" style="left:346px;top:568px;width:81px;height:25px;background:#F9F9F9;border:1px solid #EDEDED;border-bottom:none"></div>
<div class="a" style="left:427px;top:571px;width:95px;height:22px;background:#F2F2F2;border:1px solid #E6E6E6;border-bottom:none"></div>
<svg style="left:355px;top:573px" width="13" height="12" viewBox="0 0 13 12"><rect x="0.5" y="0.5" width="12" height="11" fill="none" stroke="#424242"/><rect x="0.5" y="0.5" width="12" height="3" fill="#424242"/><path d="M4.5 3v9M8.5 3v9M0 6.5h13M0 9.5h13" stroke="#424242"/></svg>
<div class="t" style="left:375px;top:572.5px;font-size:13.3px;color:#000">Results</div>
<svg style="left:433px;top:573px" width="16" height="16" viewBox="0 0 16 16"><rect x="8" y="0.5" width="6.5" height="11.5" fill="#424242"/><path d="M9 2.8h4.5M9 5h4.5" stroke="#E8E8E8" stroke-width="0.9"/><rect x="12" y="9" width="1.4" height="1.4" fill="#E8E8E8"/><path d="M0.8 5.5h5.2l2.2 2.2v7.6H0.8z" fill="#FAFAFA" stroke="#424242" stroke-width="1.4"/><path d="M2.5 9.3h4M2.5 11.3h4M2.5 13.3h4" stroke="#424242" stroke-width="1"/></svg>
<div class="t" style="left:454px;top:575px;font-size:13.3px;letter-spacing:0.4px;color:#000">Messages</div>
<div class="a" style="left:349px;top:593px;width:766px;height:381px;background:#A0A0A0;"></div>
<div class="a" style="left:350px;top:594px;width:765px;height:379px;background:#FFFFFF;"></div>
<div class="a" style="left:639px;top:873px;width:83px;height:20px;background:#FFFFE1;"></div>
<div class="a" style="left:350px;top:613px;width:726px;height:1px;background:#F0F0F0;"></div>
<div class="a" style="left:350px;top:633px;width:726px;height:1px;background:#F0F0F0;"></div>
<div class="a" style="left:350px;top:653px;width:726px;height:1px;background:#F0F0F0;"></div>
<div class="a" style="left:350px;top:673px;width:726px;height:1px;background:#F0F0F0;"></div>
<div class="a" style="left:350px;top:693px;width:726px;height:1px;background:#F0F0F0;"></div>
<div class="a" style="left:350px;top:713px;width:726px;height:1px;background:#F0F0F0;"></div>
<div class="a" style="left:350px;top:733px;width:726px;height:1px;background:#F0F0F0;"></div>
<div class="a" style="left:350px;top:753px;width:726px;height:1px;background:#F0F0F0;"></div>
<div class="a" style="left:350px;top:773px;width:726px;height:1px;background:#F0F0F0;"></div>
<div class="a" style="left:350px;top:793px;width:726px;height:1px;background:#F0F0F0;"></div>
<div class="a" style="left:350px;top:813px;width:726px;height:1px;background:#F0F0F0;"></div>
<div class="a" style="left:350px;top:833px;width:726px;height:1px;background:#F0F0F0;"></div>
<div class="a" style="left:350px;top:853px;width:726px;height:1px;background:#F0F0F0;"></div>
<div class="a" style="left:350px;top:873px;width:726px;height:1px;background:#F0F0F0;"></div>
<div class="a" style="left:350px;top:893px;width:726px;height:1px;background:#F0F0F0;"></div>
<div class="a" style="left:350px;top:913px;width:726px;height:1px;background:#F0F0F0;"></div>
<div class="a" style="left:350px;top:933px;width:726px;height:1px;background:#F0F0F0;"></div>
<div class="a" style="left:350px;top:953px;width:726px;height:1px;background:#F0F0F0;"></div>
<div class="a" style="left:385px;top:594px;width:1px;height:379px;background:#E6E6E6;"></div>
<div class="a" style="left:479px;top:594px;width:1px;height:379px;background:#E6E6E6;"></div>
<div class="a" style="left:638px;top:594px;width:1px;height:379px;background:#E6E6E6;"></div>
<div class="a" style="left:722px;top:594px;width:1px;height:379px;background:#E6E6E6;"></div>
<div class="a" style="left:829px;top:594px;width:1px;height:379px;background:#E6E6E6;"></div>
<div class="a" style="left:915px;top:594px;width:1px;height:379px;background:#E6E6E6;"></div>
<div class="a" style="left:1011px;top:594px;width:1px;height:379px;background:#E6E6E6;"></div>
<div class="a" style="left:1076px;top:594px;width:1px;height:379px;background:#E6E6E6;"></div>
<div class="a" style="left:386px;top:613px;width:94px;height:21px;background:#E8ECF2;border:1px dotted #000"></div>
<div class="g" style="left:391px;top:598.6px;">transaction_id</div>
<div class="g" style="left:485px;top:598.6px;">full_name</div>
<div class="g" style="left:644px;top:598.6px;">customer_id</div>
<div class="g" style="left:728px;top:598.6px;">transaction_date</div>
<div class="g" style="left:835px;top:598.6px;">online_order</div>
<div class="g" style="left:921px;top:598.6px;">brand</div>
<div class="g" style="left:1017px;top:598.6px;">list_price</div>
<div class="g" style="left:356px;top:618.3px;">1</div>
<div class="g" style="left:393px;top:618.3px;">7395</div>
<div class="g" style="left:487px;top:618.3px;">Laraine Bockman</div>
<div class="g" style="left:646px;top:618.3px;">408</div>
<div class="g" style="left:730px;top:618.3px;">2017-10-24</div>
<div class="g" style="left:837px;top:618.3px;">TRUE</div>
<div class="g" style="left:923px;top:618.3px;">OHM Cycles</div>
<div class="g" style="left:1019px;top:618.3px;">1280.28</div>
<div class="g" style="left:356px;top:638.3px;">2</div>
<div class="g" style="left:393px;top:638.3px;">7396</div>
<div class="g" style="left:487px;top:638.3px;">Eli Dearle</div>
<div class="g" style="left:646px;top:638.3px;">2955</div>
<div class="g" style="left:730px;top:638.3px;">2017-10-25</div>
<div class="g" style="left:837px;top:638.3px;">FALSE</div>
<div class="g" style="left:923px;top:638.3px;">Solex</div>
<div class="g" style="left:1019px;top:638.3px;">1151.96</div>
<div class="g" style="left:356px;top:658.3px;">3</div>
<div class="g" style="left:393px;top:658.3px;">7397</div>
<div class="g" style="left:487px;top:658.3px;">Arlin Cole</div>
<div class="g" style="left:646px;top:658.3px;">2595</div>
<div class="g" style="left:730px;top:658.3px;">2017-10-26</div>
<div class="g" style="left:837px;top:658.3px;">TRUE</div>
<div class="g" style="left:923px;top:658.3px;">Solex</div>
<div class="g" style="left:1019px;top:658.3px;">71.49</div>
<div class="g" style="left:356px;top:678.3px;">4</div>
<div class="g" style="left:393px;top:678.3px;">7398</div>
<div class="g" style="left:487px;top:678.3px;">Talbot Calton</div>
<div class="g" style="left:646px;top:678.3px;">732</div>
<div class="g" style="left:730px;top:678.3px;">2017-10-27</div>
<div class="g" style="left:837px;top:678.3px;">FALSE</div>
<div class="g" style="left:923px;top:678.3px;">Norco Bicycles</div>
<div class="g" style="left:1019px;top:678.3px;">586.45</div>
<div class="g" style="left:356px;top:698.3px;">5</div>
<div class="g" style="left:393px;top:698.3px;">7399</div>
<div class="g" style="left:487px;top:698.3px;">Sheila-kathryn Duckhouse</div>
<div class="g" style="left:646px;top:698.3px;">2680</div>
<div class="g" style="left:730px;top:698.3px;">2017-10-28</div>
<div class="g" style="left:837px;top:698.3px;">TRUE</div>
<div class="g" style="left:923px;top:698.3px;">Trek Bicycles</div>
<div class="g" style="left:1019px;top:698.3px;">574.64</div>
<div class="g" style="left:356px;top:718.3px;">6</div>
<div class="g" style="left:393px;top:718.3px;">7400</div>
<div class="g" style="left:487px;top:718.3px;">Curr Merali</div>
<div class="g" style="left:646px;top:718.3px;">823</div>
<div class="g" style="left:730px;top:718.3px;">2017-10-29</div>
<div class="g" style="left:837px;top:718.3px;">TRUE</div>
<div class="g" style="left:923px;top:718.3px;">Norco Bicycles</div>
<div class="g" style="left:1019px;top:718.3px;">543.39</div>
<div class="g" style="left:356px;top:738.3px;">7</div>
<div class="g" style="left:393px;top:738.3px;">7401</div>
<div class="g" style="left:487px;top:738.3px;">Fina Inder</div>
<div class="g" style="left:646px;top:738.3px;">104</div>
<div class="g" style="left:730px;top:738.3px;">2017-10-30</div>
<div class="g" style="left:837px;top:738.3px;">FALSE</div>
<div class="g" style="left:923px;top:738.3px;">Norco Bicycles</div>
<div class="g" style="left:1019px;top:738.3px;">688.63</div>
<div class="g" style="left:356px;top:758.3px;">8</div>
<div class="g" style="left:393px;top:758.3px;">7402</div>
<div class="g" style="left:487px;top:758.3px;">Rod Lind</div>
<div class="g" style="left:646px;top:758.3px;">1720</div>
<div class="g" style="left:730px;top:758.3px;">2017-10-31</div>
<div class="g" style="left:837px;top:758.3px;">TRUE</div>
<div class="g" style="left:923px;top:758.3px;">Giant Bicycles</div>
<div class="g" style="left:1019px;top:758.3px;">1765.3</div>
<div class="g" style="left:356px;top:778.3px;">9</div>
<div class="g" style="left:393px;top:778.3px;">7403</div>
<div class="g" style="left:487px;top:778.3px;">Mala Birdall</div>
<div class="g" style="left:646px;top:778.3px;">906</div>
<div class="g" style="left:730px;top:778.3px;">2017-11-01</div>
<div class="g" style="left:837px;top:778.3px;">TRUE</div>
<div class="g" style="left:923px;top:778.3px;">Giant Bicycles</div>
<div class="g" style="left:1019px;top:778.3px;">1812.75</div>
<div class="g" style="left:356px;top:798.3px;">10</div>
<div class="g" style="left:393px;top:798.3px;">7404</div>
<div class="g" style="left:487px;top:798.3px;">Fiorenze Bisatt</div>
<div class="g" style="left:646px;top:798.3px;">2643</div>
<div class="g" style="left:730px;top:798.3px;">2017-11-02</div>
<div class="g" style="left:837px;top:798.3px;">TRUE</div>
<div class="g" style="left:923px;top:798.3px;">OHM Cycles</div>
<div class="g" style="left:1019px;top:798.3px;">1073.07</div>
<div class="g" style="left:356px;top:818.3px;">11</div>
<div class="g" style="left:393px;top:818.3px;">7405</div>
<div class="g" style="left:487px;top:818.3px;">Uriah Flattman</div>
<div class="g" style="left:646px;top:818.3px;">1865</div>
<div class="g" style="left:730px;top:818.3px;">2017-11-03</div>
<div class="g" style="left:837px;top:818.3px;">FALSE</div>
<div class="g" style="left:923px;top:818.3px;">Solex</div>
<div class="g" style="left:1019px;top:818.3px;">1071.23</div>
<div class="g" style="left:356px;top:838.3px;">12</div>
<div class="g" style="left:393px;top:838.3px;">7406</div>
<div class="g" style="left:487px;top:838.3px;">Sawyere Norcross</div>
<div class="g" style="left:646px;top:838.3px;">3330</div>
<div class="g" style="left:730px;top:838.3px;">2017-11-04</div>
<div class="g" style="left:837px;top:838.3px;">FALSE</div>
<div class="g" style="left:923px;top:838.3px;">Solex</div>
<div class="g" style="left:1019px;top:838.3px;">1842.92</div>
<div class="g" style="left:356px;top:858.3px;">13</div>
<div class="g" style="left:393px;top:858.3px;">7407</div>
<div class="g" style="left:487px;top:858.3px;">Rayshell Radage</div>
<div class="g" style="left:646px;top:858.3px;">3378</div>
<div class="g" style="left:730px;top:858.3px;">2017-11-05</div>
<div class="g" style="left:837px;top:858.3px;">FALSE</div>
<div class="g" style="left:923px;top:858.3px;">Solex</div>
<div class="g" style="left:1019px;top:858.3px;">100.35</div>
<div class="g" style="left:356px;top:878.3px;">14</div>
<div class="g" style="left:393px;top:878.3px;">7408</div>
<div class="g" style="left:487px;top:878.3px;">Erroll Parr</div>
<div class="g" style="left:646px;top:878.3px;">NULL</div>
<div class="g" style="left:730px;top:878.3px;">2017-11-06</div>
<div class="g" style="left:837px;top:878.3px;">FALSE</div>
<div class="g" style="left:923px;top:878.3px;">Trek Bicycles</div>
<div class="g" style="left:1019px;top:878.3px;">495.72</div>
<div class="g" style="left:356px;top:898.3px;">15</div>
<div class="g" style="left:393px;top:898.3px;">7409</div>
<div class="g" style="left:487px;top:898.3px;">Harlin Faraday</div>
<div class="g" style="left:646px;top:898.3px;">1679</div>
<div class="g" style="left:730px;top:898.3px;">2017-11-07</div>
<div class="g" style="left:837px;top:898.3px;">FALSE</div>
<div class="g" style="left:923px;top:898.3px;">WeareA2B</div>
<div class="g" style="left:1019px;top:898.3px;">1762.96</div>
<div class="g" style="left:356px;top:918.3px;">16</div>
<div class="g" style="left:393px;top:918.3px;">7410</div>
<div class="g" style="left:487px;top:918.3px;">Heath Neasham</div>
<div class="g" style="left:646px;top:918.3px;">1567</div>
<div class="g" style="left:730px;top:918.3px;">2017-11-08</div>
<div class="g" style="left:837px;top:918.3px;">TRUE</div>
<div class="g" style="left:923px;top:918.3px;">Solex</div>
<div class="g" style="left:1019px;top:918.3px;">1024.66</div>
<div class="g" style="left:356px;top:938.3px;">17</div>
<div class="g" style="left:393px;top:938.3px;">7411</div>
<div class="g" style="left:487px;top:938.3px;">Marjie Keyson</div>
<div class="g" style="left:646px;top:938.3px;">2165</div>
<div class="g" style="left:730px;top:938.3px;">2017-11-09</div>
<div class="g" style="left:837px;top:938.3px;">FALSE</div>
<div class="g" style="left:923px;top:938.3px;">OHM Cycles</div>
<div class="g" style="left:1019px;top:938.3px;">183.86</div>
<div class="g" style="left:356px;top:958.3px;">18</div>
<div class="g" style="left:393px;top:958.3px;">7412</div>
<div class="g" style="left:487px;top:958.3px;">Sorcha Firth</div>
<div class="g" style="left:646px;top:958.3px;">1533</div>
<div class="g" style="left:730px;top:958.3px;">2017-11-10</div>
<div class="g" style="left:837px;top:958.3px;">TRUE</div>
<div class="g" style="left:923px;top:958.3px;">Solex</div>
<div class="g" style="left:1019px;top:958.3px;">478.16</div>
<div class="a" style="left:345px;top:974px;width:770px;height:5px;background:#FFFFFF;"></div>
<div class="a" style="left:345px;top:976px;width:770px;height:1px;background:#E6E6E6;"></div>
<div class="a" style="left:344px;top:979px;width:771px;height:24px;background:#F0E68C;"></div>
<div class="a" style="left:344px;top:974px;width:1px;height:30px;background:#9AA5BF;"></div>
<div class="a" style="left:344px;top:1003px;width:771px;height:1px;background:#8E9BBC;"></div>
<svg style="left:348px;top:983px" width="16" height="16" viewBox="0 0 16 16"><circle cx="7.8" cy="7.8" r="7.3" fill="#339933" stroke="#fff" stroke-width="1"/><path d="M4.3 8.3l2.6 3.2 4.4-6.6" stroke="#fff" stroke-width="2.1" fill="none"/></svg>
<div class="t" style="left:369px;top:983.6px;font-size:14.5px;color:#1E1E1E">Query executed successfully.</div>
</body></html>
